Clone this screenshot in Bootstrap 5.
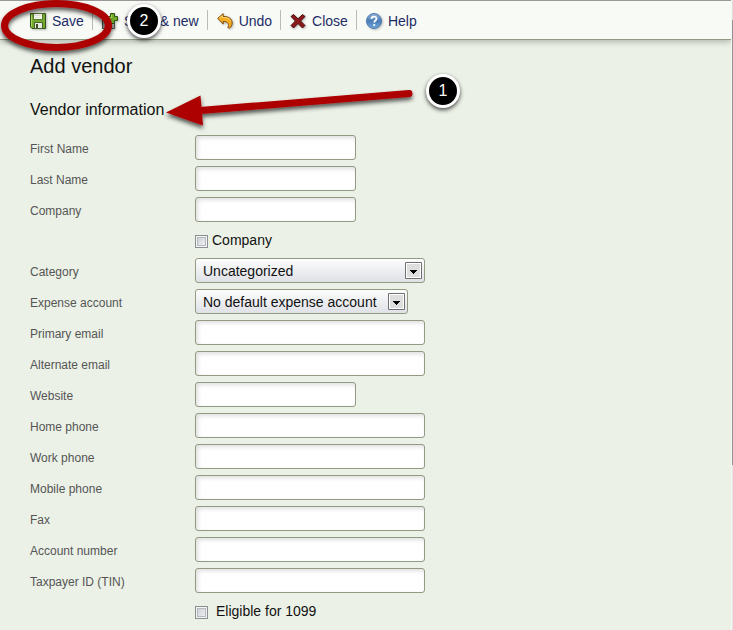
<!DOCTYPE html>
<html lang="en">
<head>
<meta charset="utf-8">
<meta name="viewport" content="width=device-width, initial-scale=1">
<title>Add vendor</title>
<link href="https://cdn.jsdelivr.net/npm/bootstrap@5.3.0/dist/css/bootstrap.min.css" rel="stylesheet">
<style>
  body { background: #ebf1e7; color: #111; font: 14px/20px "Liberation Sans", Arial, sans-serif; }
  .toolbar { background: #f8faf5; border-top: 1px solid #999; border-bottom: 1px solid #8f9a80; box-shadow: 0 2px 6px rgba(0,0,0,.25); height: 40px; padding: 0 21px; }
  .tool { --bs-btn-padding-x: 8px; --bs-btn-padding-y: 0; --bs-btn-font-size: 14px; --bs-btn-line-height: 20px; --bs-btn-border-width: 0; --bs-btn-color: #1d2c67; --bs-btn-hover-color: #1d2c67; padding-left: 9px; gap: 6px; padding-top: 2px; }
  .tool svg { filter: drop-shadow(1px 1px 1px rgba(0,0,0,.25)); }
  .divider { width: 1px; height: 20px; background: #b9bdb4; }
  .page-body { padding: 14px 30px 0; }
  .page-title { font-size: 20px; line-height: 24px; margin: 0 0 20px; }
  .section-title { font-size: 16px; line-height: 24px; margin: 0 0 13px; }
  .field-list { gap: 6px; }
  .field-row { height: 25px; }
  .tick-row { height: 24px; }
  .field-label { width: 165px; font-size: 12px; color: #555; padding-top: 2px; }
  .field-box { height: 25px; min-height: 0; padding: 1px 7px; border: 1px solid #939a83; border-radius: 3px; font-size: 14px; line-height: 20px; color: #111; }
  input.field-box { box-shadow: inset 2px 2px 4px rgba(0,0,0,.13); }
  .w-short { width: 161px; }
  .w-long { width: 230px; }
  .w-account { width: 213px; }
  select.field-box { background: url("data:image/svg+xml,%3Csvg xmlns='http://www.w3.org/2000/svg' width='17' height='17'%3E%3Cpath fill='%23fff' stroke='%23707070' d='M.5.5h16v16H.5z'/%3E%3Cpath fill='%23dedede' d='M2 2h13v13H2z'/%3E%3Cpath d='M5 8h7v1h-1v1h-1v1H9v1H8v-1H7v-1H6V9H5z'/%3E%3C/svg%3E") no-repeat right 2px center, linear-gradient(#fdfdfd, #dfe1e7); }
  .tick { appearance: none; width: 13px; height: 13px; margin: 2px 0 0; border: 1px solid #8c8f8f; background: linear-gradient(135deg, #c7cbd1, #f5f5f5); box-shadow: inset 0 0 0 1px #f4f4f4, inset 0 0 0 2px #b6bac0; }
  .tick:checked { background: #456; }
  .tick-wide { margin-right: 4px; }
  .page-edge { width: 2px; border-left: 1px solid #f5f7f2; background: linear-gradient(#dcdedb 20px, #929292 20px, #929292 465px, #e2e4e4 465px); }
  .annotation { left: 0; top: 0; pointer-events: none; }
  .step { width: 34px; height: 34px; border: 3px solid #fff; background: #000; color: #fff; font-size: 16px; box-shadow: 0 2px 4px rgba(0,0,0,.7); }
  .step-one { left: 426px; top: 74px; }
  .step-two { left: 127px; top: 4px; }
</style>
<script src="https://cdn.jsdelivr.net/npm/bootstrap@5.3.0/dist/js/bootstrap.bundle.min.js"></script>
</head>
<body class="position-relative">
<div class="d-flex min-vh-100">
  <div class="flex-grow-1">
    <header class="toolbar d-flex align-items-center" role="toolbar" aria-label="Vendor actions">
      <button type="button" class="btn tool d-flex align-items-center">
        <svg width="16" height="16" viewBox="0 0 16 16" aria-hidden="true"><path d="M.5.5h15v15H2L.5 14z" fill="#75a92d" stroke="#34521d"/><path d="M1.500 1.500v12" stroke="#a7d45d"/><path d="M3.500.5h9v6h-9z" fill="#f6f8ee" stroke="#55752f"/><path d="M5 2.500h6M5 4.500h6" stroke="#e0e4d6"/><path d="M4.500 9.500h8v6h-8z" fill="#e7eadf" stroke="#42612b"/><path d="M6 11h2v4H6z" fill="#405028"/></svg>
        <span>Save</span>
      </button>
      <span class="divider"></span>
      <button type="button" class="btn tool d-flex align-items-center">
        <svg width="16" height="16" viewBox="0 0 16 16" aria-hidden="true"><path d="M.5 4.500h12v11H.5z" fill="#a5aaa1" stroke="#4b5047"/><path d="M3.500 10.500h6v5h-6z" fill="#e5e7e1" stroke="#555"/><path d="M8.500.5h4v3h3v4h-3v3h-4v-3h-3v-4h3z" fill="#72aa28" stroke="#2f5516"/><path d="M9.500 2v2.500H7" fill="none" stroke="#a5d456"/></svg>
        <span>Save &amp; new</span>
      </button>
      <span class="divider"></span>
      <button type="button" class="btn tool d-flex align-items-center">
        <svg width="16" height="16" viewBox="0 0 16 16" aria-hidden="true"><path d="M.7 5.300 6.200.7v2.800c5.800-.2 9 2.500 9 6.500 0 2.300-1 4-2.800 5.200l-1.600-.6c1.600-3.300.3-6-4.600-6.200v2.700z" fill="#f4ac22" stroke="#7d4a11" stroke-linejoin="round"/><path d="M2.300 5.200 5.300 2.800v1.700c4.200-.1 6.900.8 8 3.200" fill="none" stroke="#ffd76b"/></svg>
        <span>Undo</span>
      </button>
      <span class="divider"></span>
      <button type="button" class="btn tool d-flex align-items-center">
        <svg width="16" height="16" viewBox="0 0 16 16" aria-hidden="true"><path d="M1 3.500 3.500 1.500 8 5.800 12.500 1.500 15 3.500 10.600 8 15 12.500 12.500 15 8 10.500 3.500 15 1 12.500 5.400 8z" fill="#8b1919" stroke="#470e0e" stroke-linejoin="round"/></svg>
        <span>Close</span>
      </button>
      <span class="divider"></span>
      <button type="button" class="btn tool d-flex align-items-center">
        <svg width="16" height="16" viewBox="0 0 16 16" aria-hidden="true"><defs><linearGradient id="helpFill" x1="0" y1="0" x2="0" y2="1"><stop stop-color="#93b4da"/><stop offset=".5" stop-color="#4a7cb8"/><stop offset="1" stop-color="#70a8db"/></linearGradient></defs><circle cx="8" cy="8" r="7.500" fill="url(#helpFill)" stroke="#507caf"/><path d="M5.500 6c0-3.200 5-3.200 5-.2 0 1.700-2.300 1.700-2.300 3.700" fill="none" stroke="#fff" stroke-width="1.800"/><circle cx="8.200" cy="12" r="1.100" fill="#fff"/></svg>
        <span>Help</span>
      </button>
    </header>

    <main class="page-body">
      <h1 class="page-title fw-normal">Add vendor</h1>
      <form>
        <h2 class="section-title fw-normal">Vendor information</h2>
        <div class="field-list d-flex flex-column">
          <div class="field-row d-flex align-items-center"><label class="field-label" for="firstName">First Name</label><input class="form-control field-box w-short" id="firstName" type="text"></div>
          <div class="field-row d-flex align-items-center"><label class="field-label" for="lastName">Last Name</label><input class="form-control field-box w-short" id="lastName" type="text"></div>
          <div class="field-row d-flex align-items-center"><label class="field-label" for="company">Company</label><input class="form-control field-box w-short" id="company" type="text"></div>
          <div class="tick-row d-flex align-items-center"><span class="field-label"></span><input class="tick" id="isCompany" type="checkbox"><label class="ps-1" for="isCompany">Company</label></div>
          <div class="field-row d-flex align-items-center"><label class="field-label" for="category">Category</label><select class="form-select field-box w-long" id="category"><option>Uncategorized</option></select></div>
          <div class="field-row d-flex align-items-center"><label class="field-label" for="account">Expense account</label><select class="form-select field-box w-account" id="account"><option>No default expense account</option></select></div>
          <div class="field-row d-flex align-items-center"><label class="field-label" for="email">Primary email</label><input class="form-control field-box w-long" id="email" type="email"></div>
          <div class="field-row d-flex align-items-center"><label class="field-label" for="altEmail">Alternate email</label><input class="form-control field-box w-long" id="altEmail" type="email"></div>
          <div class="field-row d-flex align-items-center"><label class="field-label" for="website">Website</label><input class="form-control field-box w-short" id="website" type="text"></div>
          <div class="field-row d-flex align-items-center"><label class="field-label" for="homePhone">Home phone</label><input class="form-control field-box w-long" id="homePhone" type="tel"></div>
          <div class="field-row d-flex align-items-center"><label class="field-label" for="workPhone">Work phone</label><input class="form-control field-box w-long" id="workPhone" type="tel"></div>
          <div class="field-row d-flex align-items-center"><label class="field-label" for="mobilePhone">Mobile phone</label><input class="form-control field-box w-long" id="mobilePhone" type="tel"></div>
          <div class="field-row d-flex align-items-center"><label class="field-label" for="fax">Fax</label><input class="form-control field-box w-long" id="fax" type="tel"></div>
          <div class="field-row d-flex align-items-center"><label class="field-label" for="accountNumber">Account number</label><input class="form-control field-box w-long" id="accountNumber" type="text"></div>
          <div class="field-row d-flex align-items-center"><label class="field-label" for="taxpayer">Taxpayer ID (TIN)</label><input class="form-control field-box w-long" id="taxpayer" type="text"></div>
          <div class="tick-row d-flex align-items-center"><span class="field-label"></span><input class="tick tick-wide" id="eligible" type="checkbox"><label class="ps-1" for="eligible">Eligible for 1099</label></div>
        </div>
      </form>
    </main>
  </div>
  <div class="page-edge flex-shrink-0"></div>
</div>

<svg class="annotation position-absolute" width="430" height="140" viewBox="0 0 430 140" aria-hidden="true">
  <defs><filter id="calloutShadow" x="-10%" y="-20%" width="120%" height="150%"><feDropShadow dx="0" dy="3" stdDeviation="2" flood-opacity=".65"/></filter></defs>
  <ellipse cx="56.500" cy="25.500" rx="52" ry="22" fill="none" stroke="#ad0202" stroke-width="7" filter="url(#calloutShadow)"/>
  <g filter="url(#calloutShadow)" fill="#ad0202"><path d="M200 110.500 409 93.500" stroke="#ad0202" stroke-width="7" stroke-linecap="round"/><path d="M166 112.500 200.500 95.500 203 125.500z"/></g>
</svg>
<span class="step step-one position-absolute rounded-circle d-flex align-items-center justify-content-center">1</span>
<span class="step step-two position-absolute rounded-circle d-flex align-items-center justify-content-center">2</span>
</body>
</html>
